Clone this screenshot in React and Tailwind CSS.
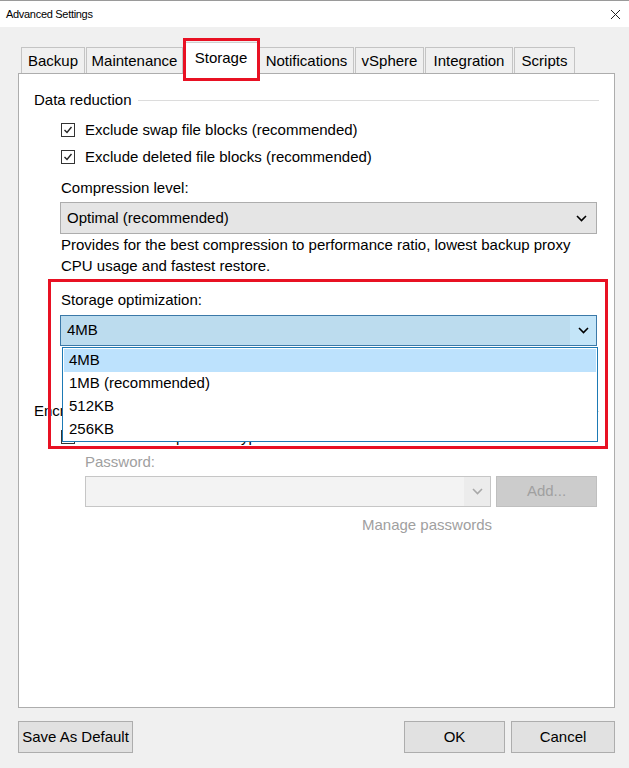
import React from 'react';

const tabs = [
  { name: 'Backup', w: 'w-[64px]' },
  { name: 'Maintenance', w: 'w-[97px]' },
  { name: 'Storage', w: 'w-[76px]', active: true },
  { name: 'Notifications', w: 'w-[95px]' },
  { name: 'vSphere', w: 'w-[69px]' },
  { name: 'Integration', w: 'w-[88px]' },
  { name: 'Scripts', w: 'w-[61px]' },
];

const options = ['4MB', '1MB (recommended)', '512KB', '256KB'];

const Chevron = ({ color = '#000' }) => (
  <svg width="11" height="7" viewBox="0 0 11 7">
    <polyline points="1,1 5.5,5.5 10,1" fill="none" stroke={color} strokeWidth="1.6" />
  </svg>
);

const Checkbox = ({ checked = true }) => (
  <div className="w-[14px] h-[14px] border border-[#333333] bg-white flex items-center justify-center">
    {checked && (
      <svg width="10" height="10" viewBox="0 0 10 10">
        <polyline points="1.5,5 4,7.5 8.5,2" fill="none" stroke="#222" strokeWidth="1.4" />
      </svg>
    )}
  </div>
);

const App = () => {
  return (
    <div className="relative w-[629px] h-[768px] bg-[#f0f0f0] overflow-hidden font-['Liberation_Sans',Arial,sans-serif] text-[15px] text-black border-t border-[#9a9a9a]">
      {/* title bar */}
      <div className="h-[26px] bg-white flex items-center justify-between pl-[6px] pr-[8px]">
        <span className="text-[11px] tracking-[-0.3px]">Advanced Settings</span>
        <svg width="11" height="11" viewBox="0 0 11 11">
          <path d="M1 1 L10 10 M10 1 L1 10" stroke="#222" strokeWidth="1" />
        </svg>
      </div>

      {/* tabs */}
      <div className="flex items-end ml-[21px] mt-[15px] h-[32px] gap-[1px] relative z-10">
        {tabs.map((t) =>
          t.active ? (
            <div
              key={t.name}
              className={`${t.w} h-[32px] -mx-[1px] bg-white border border-b-0 border-[#d0d0d0] flex items-center justify-center pb-[1px]`}
            >
              {t.name}
            </div>
          ) : (
            <div
              key={t.name}
              className={`${t.w} h-[26px] bg-[#f0f0f0] border border-b-0 border-[#c4c4c4] flex items-center justify-center pt-[2px] mb-[1px]`}
            >
              {t.name}
            </div>
          )
        )}
      </div>

      {/* panel */}
      <div className="relative ml-[18px] w-[597px] h-[635px] -mt-[1px] bg-white border border-[#adadad]">
        <div className="flex items-center mt-[17px] h-[18px] pl-[15px] pr-[15px]">
          <span>Data reduction</span>
          <div className="flex-1 h-px bg-[#dcdcdc] ml-[6px]" />
        </div>

        <div className="flex items-center gap-[10px] mt-[12px] h-[18px] ml-[42px]">
          <Checkbox />
          <span>Exclude swap file blocks (recommended)</span>
        </div>
        <div className="flex items-center gap-[10px] mt-[9px] h-[18px] ml-[42px]">
          <Checkbox />
          <span>Exclude deleted file blocks (recommended)</span>
        </div>

        <div className="mt-[13px] h-[18px] leading-[18px] ml-[42px]">Compression level:</div>
        <div className="mt-[5px] ml-[41px] w-[537px] h-[32px] bg-[#e5e5e5] border border-[#adadad] flex items-center justify-between pl-[6px] pr-[9px]">
          <span>Optimal (recommended)</span>
          <Chevron />
        </div>
        <div className="ml-[42px] leading-[21px] w-[530px]">
          Provides for the best compression to performance ratio, lowest backup proxy CPU usage and fastest restore.
        </div>

        <div className="mt-[15px] h-[18px] leading-[18px] ml-[42px]">Storage optimization:</div>
        <div className="relative mt-[6px] ml-[41px] w-[537px] h-[31px]">
          <div className="h-full bg-[#bcdcee] border border-[#3b79a8] flex items-center justify-between pl-[6px]">
            <span>4MB</span>
            <div className="w-[26px] h-full bg-[#c4e5f8] flex items-center justify-center">
              <Chevron />
            </div>
          </div>

          {/* open list */}
          <div className="absolute top-[32px] left-[2px] w-[536px] h-[95px] bg-white border border-[#1d7ab5] p-[1px] z-20">
            {options.map((o, i) => (
              <div
                key={o}
                className={`h-[23px] flex items-center pl-[5px] ${i === 0 ? 'bg-[#bde2fd]' : ''}`}
              >
                {o}
              </div>
            ))}
          </div>
        </div>

        <div className="flex items-center mt-[56px] h-[18px] pl-[15px] pr-[15px]">
          <span>Encryption</span>
          <div className="flex-1 h-px bg-[#dcdcdc] ml-[6px]" />
        </div>
        <div className="flex items-center gap-[10px] mt-[8px] h-[18px] ml-[42px]">
          <Checkbox checked={false} />
          <span>Enable backup file encryption</span>
        </div>

        <div className="mt-[7px] h-[18px] leading-[18px] ml-[66px] text-[#a0a0a0]">Password:</div>
        <div className="flex mt-[5px] ml-[66px] gap-[5px]">
          <div className="w-[406px] h-[31px] bg-[#f3f3f3] border border-[#c6c6c6] flex justify-end">
            <div className="w-[26px] h-full bg-[#ececec] flex items-center justify-center">
              <Chevron color="#a8a8a8" />
            </div>
          </div>
          <div className="w-[101px] h-[31px] bg-[#cccccc] border border-[#bfbfbf] flex items-center justify-center text-[#a0a0a0]">
            Add...
          </div>
        </div>
        <div className="mt-[9px] h-[18px] leading-[18px] ml-[343px] text-[#a0a0a0]">Manage passwords</div>
      </div>

      {/* buttons */}
      <div className="flex items-center mt-[13px] ml-[18px] mr-[14px] h-[32px]">
        <div className="w-[115px] h-[32px] bg-[#e1e1e1] border border-[#adadad] flex items-center justify-center">
          Save As Default
        </div>
        <div className="flex-1" />
        <div className="w-[101px] h-[32px] bg-[#e1e1e1] border border-[#adadad] flex items-center justify-center">
          OK
        </div>
        <div className="w-[104px] h-[32px] ml-[6px] bg-[#e1e1e1] border border-[#adadad] flex items-center justify-center">
          Cancel
        </div>
      </div>

      {/* annotation boxes */}
      <div className="absolute left-[183px] top-[37px] w-[77px] h-[43px] border-[3px] border-[#e81123] z-30" />
      <div className="absolute left-[48px] top-[278px] w-[560px] h-[170px] border-[3px] border-[#e81123] z-30" />
    </div>
  );
};

export default App;
